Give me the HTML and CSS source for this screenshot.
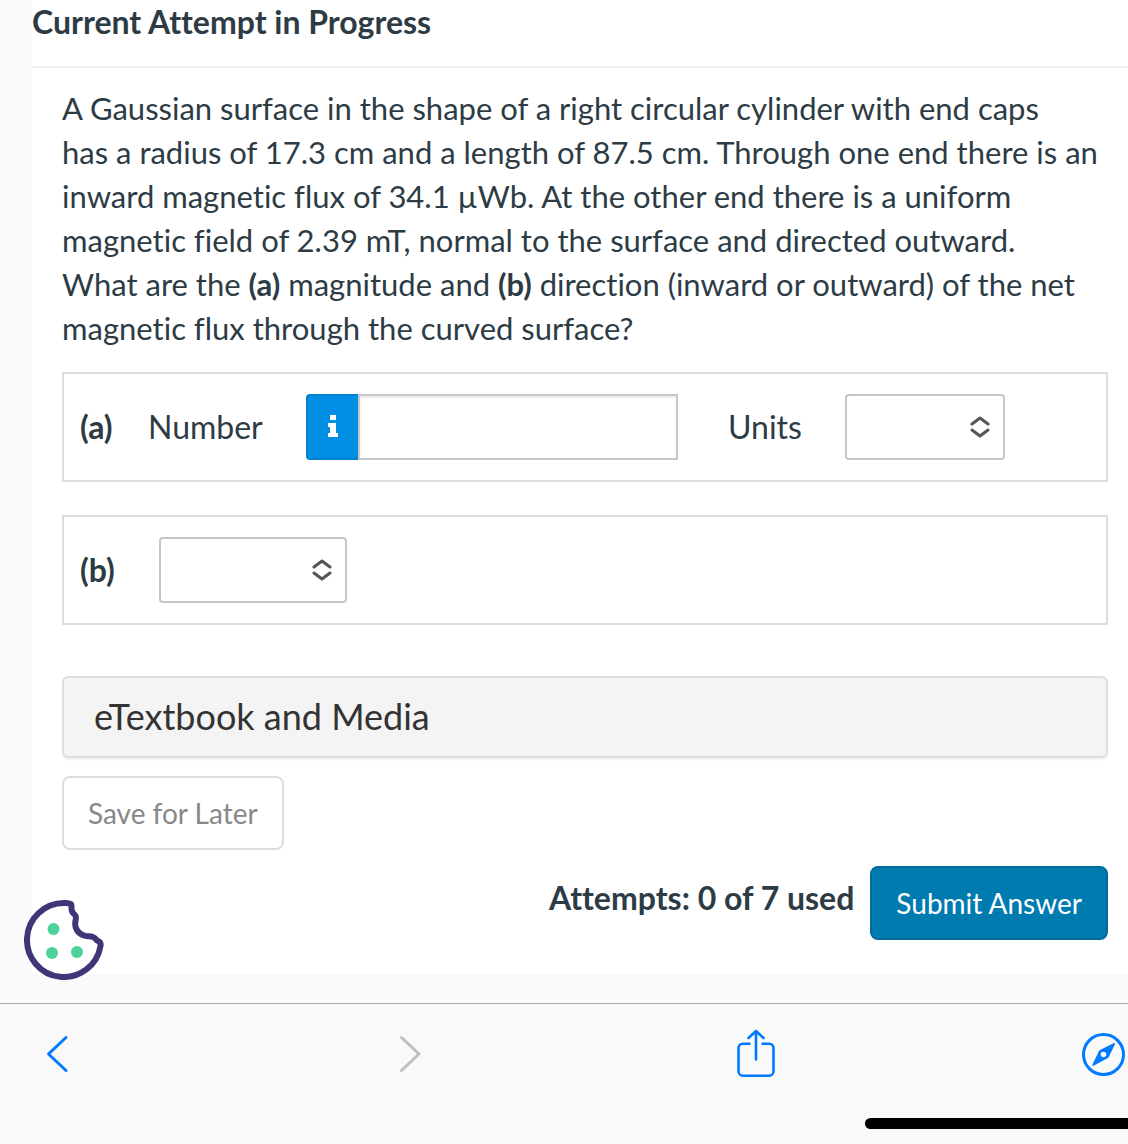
FILE: index.html
```html
<!DOCTYPE html>
<html lang="en">
<head>
<meta charset="utf-8">
<meta name="viewport" content="width=device-width, initial-scale=1">
<title>Current Attempt in Progress</title>
<link rel="stylesheet" href="styles.css">
</head>
<body>
<main class="card">
  <h1 class="card-title">Current Attempt in Progress</h1>
  <form class="question">
    <p class="prompt">A Gaussian surface in the shape of a right circular cylinder with end caps<br>
      has a radius of 17.3 cm and a length of 87.5 cm. Through one end there is an<br>
      inward magnetic flux of 34.1 µWb. At the other end there is a uniform<br>
      magnetic field of 2.39 mT, normal to the surface and directed outward.<br>
      What are the <b>(a)</b> magnitude and <b>(b)</b> direction (inward or outward) of the net<br>
      magnetic flux through the curved surface?</p>

    <div class="answer">
      <b class="part">(a)</b>
      <label class="number-label" for="number">Number</label>
      <div class="input-group">
        <button class="info" type="button" aria-label="Number format help">
          <svg width="12" height="22" viewBox="0 0 12 22" fill="#fff" aria-hidden="true"><path d="M3 0h6v5H3zM1 8h8v10h2v4H1v-4h2v-6H1z"/></svg>
        </button>
        <input class="number" id="number" type="text">
      </div>
      <label class="units-label" for="units">Units</label>
      <div class="picker picker-units">
        <select class="select" id="units"><option></option></select>
        <svg class="arrows" width="20" height="22" viewBox="0 0 20 22" aria-hidden="true"><path d="M2 8l8-6 8 6M2 14l8 6 8-6"/></svg>
      </div>
    </div>

    <div class="answer">
      <label class="part part-wide" for="direction">(b)</label>
      <div class="picker picker-direction">
        <select class="select" id="direction"><option></option></select>
        <svg class="arrows" width="20" height="22" viewBox="0 0 20 22" aria-hidden="true"><path d="M2 8l8-6 8 6M2 14l8 6 8-6"/></svg>
      </div>
    </div>

    <button class="resources" type="button">eTextbook and Media</button>
    <button class="btn btn-save" type="button">Save for Later</button>
    <div class="submit-row">
      <span class="attempts">Attempts: 0 of 7 used</span>
      <button class="btn btn-submit" type="submit">Submit Answer</button>
    </div>
  </form>

  <button class="cookie" type="button" aria-label="Cookie settings">
    <svg width="80" height="80" viewBox="0 0 80 80" aria-hidden="true">
      <path d="M47 4C45 2.800 42 3 40 3A37 37 0 1 0 76.500 46C77 43.500 76.500 42 74 41C71.500 40 72 38 69 37C66 35.600 64 37 60 35.500C54 33.500 50 28 51.500 21C52.300 16.500 52 15.500 49.500 13.500C46 10.500 48.500 6.500 47 4Z" fill="#fff" stroke="#3d3778" stroke-width="6" stroke-linejoin="round"/>
      <g fill="#4bd39b"><circle cx="29.500" cy="29" r="6"/><circle cx="28" cy="53" r="6"/><circle cx="53" cy="52" r="6"/></g>
    </svg>
  </button>
</main>

<footer class="browser-bar">
  <nav class="tools" aria-label="Browser">
    <button class="tool" type="button" aria-label="Back">
      <svg width="44" height="50" viewBox="0 0 44 50" fill="none" stroke="#007aff" stroke-width="3" stroke-linecap="round" stroke-linejoin="round"><path d="M31 8.500L13.500 25 31 41.500"/></svg>
    </button>
    <button class="tool" type="button" aria-label="Forward" disabled>
      <svg width="44" height="50" viewBox="0 0 44 50" fill="none" stroke="#bfbfbf" stroke-width="3" stroke-linecap="round" stroke-linejoin="round"><path d="M13.500 8.500L31 25 13.500 41.500"/></svg>
    </button>
    <button class="tool" type="button" aria-label="Share">
      <svg width="44" height="50" viewBox="0 0 44 50" fill="none" stroke="#007aff" stroke-width="2.600" stroke-linecap="round" stroke-linejoin="round"><path d="M22 30.500V2M14.500 9L22 2l7.500 7"/><path stroke-linecap="butt" d="M16.500 14.700H9a4.500 4.500 0 0 0-4.500 4.500v23a4.500 4.500 0 0 0 4.500 4.500h26a4.500 4.500 0 0 0 4.500-4.500v-23a4.500 4.500 0 0 0-4.500-4.500h-7.500"/></svg>
    </button>
    <button class="tool" type="button" aria-label="Open in browser">
      <svg width="44" height="50" viewBox="0 0 44 50"><circle cx="22.500" cy="25.500" r="20" fill="none" stroke="#007aff" stroke-width="3"/><path fill="#007aff" fill-rule="evenodd" d="M32.500 14.200c1-.5 1.700.2 1.300 1.300L28 27.500c-.5 1-1 1.500-2 2L13 36.600c-1 .6-2-.3-1.400-1.400L17.500 23c.5-1 1-1.600 2-2.200zM22.500 22.700a2.800 2.800 0 1 0 0 5.600 2.800 2.800 0 0 0 0-5.600z"/></svg>
    </button>
  </nav>
  <div class="home-indicator"></div>
</footer>
</body>
</html>
```
FILE: styles.css
```css
* {
  box-sizing: border-box;
}

body {
  margin: 0;
  min-height: 100vh;
  display: flex;
  flex-direction: column;
  background: #fafafa;
  color: #2d3b45;
  font: 32px/44px Lato, "Liberation Sans", sans-serif;
  font-variant-ligatures: none;
}

button,
input,
select {
  margin: 0;
  font: inherit;
  font-variant-ligatures: none;
  color: inherit;
}

.card {
  position: relative;
  margin: 0 0 29px 32px;
  background: #fff;
}

.card-title {
  margin: 0;
  padding-bottom: 22px;
  border-bottom: 2px solid #eee;
  font-size: 32px;
  font-weight: 700;
}

.question {
  display: flex;
  flex-direction: column;
  padding: 18px 20px 34px 30px;
}

.prompt {
  margin: 0 0 22px;
  font-size: 31px;
}

.answer {
  display: flex;
  align-items: center;
  min-height: 110px;
  margin-bottom: 33px;
  padding: 20px 16px;
  border: 2px solid #ddd;
}

.part {
  flex: none;
  width: 68px;
  font-weight: 700;
}

.part-wide {
  width: 79px;
}

.number-label {
  flex: none;
  width: 158px;
}

.input-group {
  display: flex;
  flex: 0 1 372px;
  min-width: 120px;
  height: 66px;
  margin-right: 50px;
}

.info {
  display: flex;
  flex: none;
  align-items: center;
  justify-content: center;
  width: 52px;
  padding: 0 0 2px;
  border: 2px solid #0081d3;
  border-right: 0;
  border-radius: 4px 0 0 4px;
  background: #008ee2;
}

.number {
  flex: 1;
  min-width: 0;
  padding: 0 12px;
  border: 2px solid #c7c7c7;
  border-radius: 0;
  background: #fff;
  box-shadow: inset 0 2px 2px rgba(0, 0, 0, .08);
}

.units-label {
  flex: none;
  width: 117px;
}

.picker {
  position: relative;
  height: 66px;
}

.picker-units {
  width: 160px;
}

.picker-direction {
  width: 188px;
}

.select {
  width: 100%;
  height: 100%;
  padding: 0 48px 0 16px;
  appearance: none;
  border: 2px solid #c7c7c7;
  border-radius: 4px;
  background: #fff;
}

.arrows {
  position: absolute;
  top: 22px;
  right: 15px;
  fill: none;
  stroke: #555;
  stroke-width: 3;
  stroke-linecap: round;
  stroke-linejoin: round;
  pointer-events: none;
}

.resources {
  margin: 18px 0;
  padding: 16px 30px 18px;
  border: 2px solid #ddd;
  border-radius: 6px;
  background: #f4f4f4;
  box-shadow: 0 2px 2px rgba(0, 0, 0, .05);
  color: #333;
  font-size: 36px;
  text-align: left;
}

.btn {
  height: 74px;
  padding: 0 24px;
  border: 2px solid;
  border-radius: 8px;
  font-size: 28px;
}

.btn-save {
  align-self: flex-start;
  margin-bottom: 16px;
  border-color: #ddd;
  background: #fff;
  color: #888;
}

.btn-submit {
  border-color: #006a9a;
  background: #007bb0;
  color: #fff;
}

.submit-row {
  display: flex;
  align-items: center;
  justify-content: flex-end;
  gap: 16px;
}

.attempts {
  padding-bottom: 10px;
  font-weight: 700;
}

.cookie {
  position: absolute;
  bottom: -6px;
  left: -8px;
  padding: 0;
  border: 0;
  background: none;
}

.cookie svg,
.tool svg {
  display: block;
}

.browser-bar {
  display: flex;
  flex: 1;
  flex-direction: column;
  justify-content: space-between;
  padding-bottom: 15px;
  border-top: 1px solid #aaa;
  background: #f9f9f9;
}

.tools {
  display: grid;
  grid-template-columns: 353fr 346fr 347fr 44px;
  padding: 25px 3px 0 35px;
}

.tool {
  justify-self: start;
  padding: 0;
  border: 0;
  background: none;
}

.home-indicator {
  align-self: flex-end;
  width: 263px;
  height: 11px;
  border-radius: 6px 0 0 6px;
  background: #000;
}
```
